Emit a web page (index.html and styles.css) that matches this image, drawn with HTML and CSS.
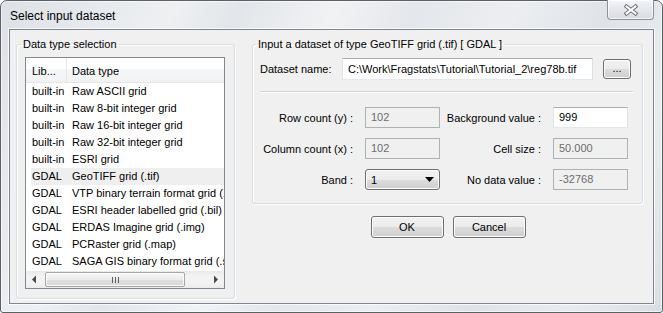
FILE: index.html
```html
<!DOCTYPE html>
<html>
<head>
<meta charset="utf-8">
<title>Select input dataset</title>
<link rel="stylesheet" href="styles.css">
</head>
<body>
<div class="window">
  <div class="titlebar">
    <span class="title">Select input dataset</span>
    <div class="close">
      <svg width="47" height="19" viewBox="0 0 47 19">
        <path d="M19.5 7.5 L28.5 14.5 M28.5 7.5 L19.5 14.5" stroke="#6a6e73" stroke-width="4" stroke-linecap="square" fill="none"/>
        <path d="M19.5 7.5 L28.5 14.5 M28.5 7.5 L19.5 14.5" stroke="#ffffff" stroke-width="2" stroke-linecap="square" fill="none"/>
      </svg>
    </div>
  </div>
  <div class="client">
    <fieldset class="group group-types">
      <legend>Data type selection</legend>
      <div class="list">
        <div class="list-head">
          <div class="hcell hcol1">Lib...</div>
          <div class="hcell hcol2">Data type</div>
        </div>
        <div class="list-body">
          <div class="row"><span class="c1">built-in</span><span class="c2">Raw ASCII grid</span></div>
          <div class="row"><span class="c1">built-in</span><span class="c2">Raw 8-bit integer grid</span></div>
          <div class="row"><span class="c1">built-in</span><span class="c2">Raw 16-bit integer grid</span></div>
          <div class="row"><span class="c1">built-in</span><span class="c2">Raw 32-bit integer grid</span></div>
          <div class="row"><span class="c1">built-in</span><span class="c2">ESRI grid</span></div>
          <div class="row selected"><span class="c1">GDAL</span><span class="c2">GeoTIFF grid (.tif)</span></div>
          <div class="row"><span class="c1">GDAL</span><span class="c2">VTP binary terrain format grid (.bt)</span></div>
          <div class="row"><span class="c1">GDAL</span><span class="c2">ESRI header labelled grid (.bil)</span></div>
          <div class="row"><span class="c1">GDAL</span><span class="c2">ERDAS Imagine grid (.img)</span></div>
          <div class="row"><span class="c1">GDAL</span><span class="c2">PCRaster grid (.map)</span></div>
          <div class="row"><span class="c1">GDAL</span><span class="c2">SAGA GIS binary format grid (.sdat)</span></div>
        </div>
        <div class="hscroll">
          <div class="sb-arrow">
            <svg width="17" height="17" viewBox="0 0 17 17"><path d="M6 8.5 L10 4.5 L10 12.5 Z" fill="#4a4a4a"/></svg>
          </div>
          <div class="sb-track">
            <div class="sb-thumb">
              <svg width="7" height="6" viewBox="0 0 7 6"><path d="M0.5 0 V6 M3.5 0 V6 M6.5 0 V6" stroke="#5e5e5e" stroke-width="1"/></svg>
            </div>
          </div>
          <div class="sb-arrow">
            <svg width="17" height="17" viewBox="0 0 17 17"><path d="M11 8.5 L7 4.5 L7 12.5 Z" fill="#4a4a4a"/></svg>
          </div>
        </div>
      </div>
    </fieldset>

    <div class="right-pane">
      <fieldset class="group group-input">
        <legend>Input a dataset of type GeoTIFF grid (.tif) [ GDAL ]</legend>
        <div class="name-row">
          <span class="name-label">Dataset name:</span>
          <div class="tb tb-path">C:\Work\Fragstats\Tutorial\Tutorial_2\reg78b.tif</div>
          <div class="btn btn-browse">...</div>
        </div>
        <div class="sep"></div>
        <div class="props">
          <span class="plabel">Row count (y) :</span>
          <div class="tb tb-disabled">102</div>
          <span class="plabel">Background value :</span>
          <div class="tb">999</div>

          <span class="plabel">Column count (x) :</span>
          <div class="tb tb-disabled">102</div>
          <span class="plabel">Cell size :</span>
          <div class="tb tb-disabled">50.000</div>

          <span class="plabel">Band :</span>
          <div class="combo"><span>1</span>
            <svg width="9" height="5" viewBox="0 0 9 5"><path d="M0 0 H9 L4.5 5 Z" fill="#000"/></svg>
          </div>
          <span class="plabel">No data value :</span>
          <div class="tb tb-disabled">-32768</div>
        </div>
      </fieldset>
      <div class="actions">
        <div class="btn btn-action">OK</div>
        <div class="btn btn-action">Cancel</div>
      </div>
    </div>
  </div>
</div>
</body>
</html>
```

FILE: styles.css
```css
* { box-sizing: border-box; }

html, body {
  margin: 0;
  padding: 0;
}

body {
  width: 663px;
  height: 313px;
  overflow: hidden;
  background: #ffffff;
  font-family: "Liberation Sans", Arial, sans-serif;
  font-size: 11px;
  color: #000;
}

.window {
  width: 663px;
  height: 313px;
  border: 1px solid #5c6168;
  border-radius: 7px 7px 3px 3px;
  padding: 0 8px 8px 8px;
  display: flex;
  flex-direction: column;
  background:
    linear-gradient(115deg,
      #dde1e6 0%, #e6e9ed 12%, #eef0f2 22%, #e2e6ea 30%,
      #f1f2f4 42%, #e4e7eb 52%, #eceef1 64%, #dfe3e8 76%,
      #e9ecef 88%, #dadee3 100%);
  box-shadow: inset 0 0 0 1px rgba(255,255,255,0.6);
}

.titlebar {
  height: 28px;
  flex: none;
  display: flex;
  align-items: flex-start;
}

.title {
  font-size: 12px;
  line-height: 14px;
  margin-top: 8px;
  margin-left: 1px;
  color: #000;
}

.close {
  margin-left: auto;
  margin-top: -1px;
  width: 47px;
  height: 20px;
  border: 1px solid #8d929a;
  border-top: none;
  border-radius: 0 0 4px 4px;
  background: linear-gradient(#f4f5f7, #e3e6ea 55%, #d9dde2);
  box-shadow: inset 0 0 0 1px rgba(255,255,255,0.7);
}

.close svg { display: block; margin: -1px 0 0 -1px; }

.client {
  height: 275px;
  flex: none;
  border: 1px solid #7f868f;
  box-shadow: 0 0 0 1px rgba(255,255,255,0.75);
  background: #f0f0f0;
  display: flex;
  align-items: flex-start;
  padding: 7px 0 0 6px;
}

.group {
  margin: 0;
  min-width: 0;
  border: 1px solid #d5dfe5;
  border-radius: 3px;
  box-shadow: inset 1px 1px 0 #ffffff, 1px 1px 0 #ffffff;
}

.group legend {
  margin-left: -4px;
  padding: 0 2px;
  line-height: 14px;
  font-size: 11px;
}

.group-types {
  width: 219px;
  height: 262px;
  padding: 6px 9px 0 8px;
}

.list {
  width: 200px;
  height: 232px;
  border: 1px solid #828790;
  background: #ffffff;
  display: flex;
  flex-direction: column;
  overflow: hidden;
}

.list-head {
  height: 25px;
  flex: none;
  display: flex;
  border-bottom: 1px solid #e5e5e5;
  background: linear-gradient(#ffffff 0%, #ffffff 45%, #f6f7f8 45%, #f1f2f4 100%);
}

.hcell {
  line-height: 24px;
  padding-top: 1px;
  white-space: nowrap;
}

.hcol1 {
  width: 41px;
  padding-left: 6px;
  border-right: 1px solid #e3e6ea;
}

.hcol2 { padding-left: 5px; }

.list-body {
  flex: 1;
  overflow: hidden;
}

.row {
  height: 17px;
  line-height: 17px;
  margin-left: 5px;
  display: flex;
  white-space: nowrap;
}

.row.selected { background: #efefef; }

.c1 { width: 35px; padding-left: 1px; flex: none; }
.c2 { padding-left: 6px; }

.hscroll {
  height: 17px;
  flex: none;
  display: flex;
  background: linear-gradient(#e9e9e9, #f3f3f3 30%, #f3f3f3 70%, #ebebeb);
}

.sb-arrow { width: 17px; height: 17px; flex: none; }
.sb-arrow svg { display: block; }

.sb-track { flex: 1; display: flex; align-items: center; }

.sb-thumb {
  margin-left: 2px;
  width: 140px;
  height: 15px;
  border: 1px solid #a6a6a6;
  border-radius: 2px;
  background: linear-gradient(#f7f7f7, #ececec 50%, #dedede 50%, #d9d9d9);
  box-shadow: inset 0 0 0 1px rgba(255,255,255,0.8);
  display: flex;
  align-items: center;
  justify-content: center;
}

.sb-thumb svg { display: block; }

.right-pane {
  margin-left: 17px;
  display: flex;
  flex-direction: column;
}

.group-input {
  width: 391px;
  padding: 7px 8px 13px 7px;
}

.name-row {
  height: 22px;
  display: flex;
  align-items: center;
}

.name-label { width: 82px; flex: none; }

.tb {
  height: 21px;
  border: 1px solid;
  border-color: #abadb3 #dbdfe6 #e3e9ef #e2e3ea;
  background: #ffffff;
  padding-left: 5px;
  line-height: 19px;
  white-space: nowrap;
  overflow: hidden;
}

.tb-path {
  width: 251px;
  height: 22px;
  line-height: 20px;
  flex: none;
}

.tb-disabled {
  background: #f0f0f0;
  border-color: #adb2b5;
  color: #6d6d6d;
}

.btn {
  border: 1px solid #707070;
  border-radius: 3px;
  background: linear-gradient(#f2f2f2 0%, #ebebeb 50%, #dddddd 50%, #cfcfcf 100%);
  box-shadow: inset 0 0 0 1px #fcfcfc;
  text-align: center;
}

.btn-browse {
  margin-left: 10px;
  width: 28px;
  height: 20px;
  line-height: 16px;
}

.sep {
  margin-top: 11px;
  height: 2px;
  margin-right: 1px;
  border-top: 1px solid #d5d5d5;
  border-bottom: 1px solid #ffffff;
}

.props {
  margin-top: 14px;
  display: grid;
  grid-template-columns: 97px 75px 97px 75px;
  grid-auto-rows: 21px;
  column-gap: 8px;
  row-gap: 10px;
  align-items: center;
}

.plabel {
  display: flex;
  justify-content: flex-end;
  white-space: nowrap;
  padding-right: 4px;
}

.combo {
  height: 21px;
  border: 1px solid #707070;
  border-radius: 3px;
  background: linear-gradient(#f2f2f2 0%, #ebebeb 50%, #dddddd 50%, #cfcfcf 100%);
  box-shadow: inset 0 0 0 1px #fcfcfc;
  display: flex;
  align-items: center;
  justify-content: space-between;
  padding: 0 5px 0 5px;
}

.combo svg { display: block; }

.actions {
  margin-top: 12px;
  display: flex;
  justify-content: center;
  gap: 9px;
  padding-left: 1px;
}

.btn-action {
  width: 73px;
  height: 22px;
  line-height: 20px;
}
```
